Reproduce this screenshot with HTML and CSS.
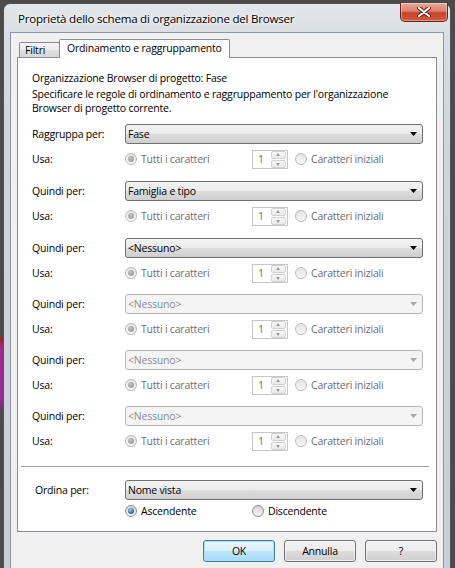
FILE: index.html
```html
<!DOCTYPE html>
<html lang="it">
<head>
<meta charset="utf-8">
<title>Proprietà dello schema di organizzazione del Browser</title>
<link rel="stylesheet" href="styles.css">
</head>
<body>
<div class="screen">
  <div class="window">
    <div class="titlebar">
      <span class="title">Proprietà dello schema di organizzazione del Browser</span>
      <div class="close">
        <svg width="14" height="10" viewBox="0 0 14 10"><path d="M2 1 L12 9 M12 1 L2 9" stroke="#5a1c12" stroke-width="4" stroke-linecap="round"/><path d="M2 1 L12 9 M12 1 L2 9" stroke="#fff" stroke-width="2.2" stroke-linecap="round"/></svg>
      </div>
    </div>
    <div class="client">
      <div class="tabs">
        <div class="tab">Filtri</div>
        <div class="tab active">Ordinamento e raggruppamento</div>
      </div>
      <div class="panel">
        <p class="info first">Organizzazione Browser di progetto: Fase</p>
        <p class="info">Specificare le regole di ordinamento e raggruppamento per l'organizzazione<br>Browser di progetto corrente.</p>

        <div class="groups">
          <div class="group">
            <div class="row"><span class="label">Raggruppa per:</span><div class="combo"><span>Fase</span><svg class="arrow" width="7" height="4" viewBox="0 0 7 4"><path d="M0 0H7L3.5 4Z"/></svg></div></div>
            <div class="row use"><span class="label">Usa:</span><div class="opts"><span class="radio dis"><span class="rc checked"></span>Tutti i caratteri</span><div class="spin"><span class="num">1</span><span class="btns"><span class="sb up"></span><span class="sb down"></span></span></div><span class="radio dis second"><span class="rc"></span>Caratteri iniziali</span></div></div>
          </div>
          <div class="group">
            <div class="row"><span class="label">Quindi per:</span><div class="combo"><span>Famiglia e tipo</span><svg class="arrow" width="7" height="4" viewBox="0 0 7 4"><path d="M0 0H7L3.5 4Z"/></svg></div></div>
            <div class="row use"><span class="label">Usa:</span><div class="opts"><span class="radio dis"><span class="rc checked"></span>Tutti i caratteri</span><div class="spin"><span class="num">1</span><span class="btns"><span class="sb up"></span><span class="sb down"></span></span></div><span class="radio dis second"><span class="rc"></span>Caratteri iniziali</span></div></div>
          </div>
          <div class="group">
            <div class="row"><span class="label">Quindi per:</span><div class="combo"><span>&lt;Nessuno&gt;</span><svg class="arrow" width="7" height="4" viewBox="0 0 7 4"><path d="M0 0H7L3.5 4Z"/></svg></div></div>
            <div class="row use"><span class="label">Usa:</span><div class="opts"><span class="radio dis"><span class="rc checked"></span>Tutti i caratteri</span><div class="spin"><span class="num">1</span><span class="btns"><span class="sb up"></span><span class="sb down"></span></span></div><span class="radio dis second"><span class="rc"></span>Caratteri iniziali</span></div></div>
          </div>
          <div class="group tight">
            <div class="row"><span class="label">Quindi per:</span><div class="combo disabled"><span>&lt;Nessuno&gt;</span><svg class="arrow" width="7" height="4" viewBox="0 0 7 4"><path d="M0 0H7L3.5 4Z"/></svg></div></div>
            <div class="row use"><span class="label">Usa:</span><div class="opts"><span class="radio dis"><span class="rc checked"></span>Tutti i caratteri</span><div class="spin"><span class="num">1</span><span class="btns"><span class="sb up"></span><span class="sb down"></span></span></div><span class="radio dis second"><span class="rc"></span>Caratteri iniziali</span></div></div>
          </div>
          <div class="group tight">
            <div class="row"><span class="label">Quindi per:</span><div class="combo disabled"><span>&lt;Nessuno&gt;</span><svg class="arrow" width="7" height="4" viewBox="0 0 7 4"><path d="M0 0H7L3.5 4Z"/></svg></div></div>
            <div class="row use"><span class="label">Usa:</span><div class="opts"><span class="radio dis"><span class="rc checked"></span>Tutti i caratteri</span><div class="spin"><span class="num">1</span><span class="btns"><span class="sb up"></span><span class="sb down"></span></span></div><span class="radio dis second"><span class="rc"></span>Caratteri iniziali</span></div></div>
          </div>
          <div class="group tight">
            <div class="row"><span class="label">Quindi per:</span><div class="combo disabled"><span>&lt;Nessuno&gt;</span><svg class="arrow" width="7" height="4" viewBox="0 0 7 4"><path d="M0 0H7L3.5 4Z"/></svg></div></div>
            <div class="row use"><span class="label">Usa:</span><div class="opts"><span class="radio dis"><span class="rc checked"></span>Tutti i caratteri</span><div class="spin"><span class="num">1</span><span class="btns"><span class="sb up"></span><span class="sb down"></span></span></div><span class="radio dis second"><span class="rc"></span>Caratteri iniziali</span></div></div>
          </div>
        </div>

        <hr class="sep">

        <div class="row order"><span class="label">Ordina per:</span><div class="combo"><span>Nome vista</span><svg class="arrow" width="7" height="4" viewBox="0 0 7 4"><path d="M0 0H7L3.5 4Z"/></svg></div></div>
        <div class="dirs">
          <span class="radio"><span class="rc on"></span>Ascendente</span>
          <span class="radio"><span class="rc off"></span>Discendente</span>
        </div>
      </div>
      <div class="buttons">
        <button class="btn default">OK</button>
        <button class="btn">Annulla</button>
        <button class="btn">?</button>
      </div>
    </div>
  </div>
</div>
</body>
</html>
```
FILE: styles.css
```css
* { box-sizing: border-box; }
html, body { margin: 0; padding: 0; }
body {
  width: 455px;
  height: 568px;
  overflow: hidden;
  background: #4b4b4b;
  font-family: "Open Sans", "Noto Sans", sans-serif;
  font-size: 10.5px;
  letter-spacing: -0.2px;
  color: #000;
}
.screen {
  height: 568px;
  padding: 3px 4px 0 3px;
  background-color: #4b4b4b;
  background-image: linear-gradient(to bottom, #4b4b4b 0, #4b4b4b 336px, #a3202a 339px, #a12a8e 350px, #9c2696 398px, #5e3e5e 410px, #4b4b4b 414px);
  background-size: 3px 100%;
  background-repeat: no-repeat;
}
.window {
  position: relative;
  height: 565px;
  border: 1px solid #4e545b;
  border-bottom: none;
  border-radius: 7px 7px 0 0;
  background: linear-gradient(to bottom, #e3e7eb 0, #d9dee4 28px, #cfd5dc 120px, #c8cfd7 100%);
  padding: 0 6px;
  display: flex;
  flex-direction: column;
}
.titlebar {
  height: 28px;
  flex: none;
  display: flex;
  align-items: center;
  padding-left: 8px;
  padding-top: 1px;
}
.title {
  font-size: 11.6px;
  letter-spacing: -0.25px;
  color: #000;
  text-shadow: 0 0 6px #fff, 0 0 3px #fff;
}
.close {
  position: absolute;
  top: -1px;
  right: 2px;
  width: 48px;
  height: 19px;
  border: 1px solid #6b2419;
  border-top: none;
  border-radius: 0 0 5px 5px;
  background: linear-gradient(to bottom, #e9a99b 0, #dd7f6b 45%, #c7432b 55%, #d35a3a 100%);
  box-shadow: inset 0 0 0 1px rgba(255,255,255,0.35);
  display: flex;
  align-items: center;
  justify-content: center;
}
.client {
  flex: 1;
  background: #f0f0f0;
  border: 1px solid #8d96a1;
  border-bottom: none;
  padding: 6px 6px 0 6px;
}
.tabs {
  display: flex;
  align-items: flex-end;
  height: 18px;
  padding-left: 2px;
  position: relative;
  z-index: 1;
}
.tab {
  width: 41px;
  height: 15px;
  padding: 0 0 0 5px;
  border: 1px solid #898c95;
  border-bottom: none;
  border-radius: 2px 2px 0 0;
  background: linear-gradient(to bottom, #f4f4f4 0, #ececec 50%, #e0e0e0 51%, #d6d6d6 100%);
  line-height: 15px;
  white-space: nowrap;
}
.tab.active {
  width: 171px;
  height: 19px;
  margin-left: -1px;
  margin-bottom: -1px;
  padding-left: 7px;
  background: #fff;
  line-height: 17px;
}
.panel {
  height: 475px;
  border: 1px solid #898c95;
  background: #fff;
}
.info {
  margin: 2px 0 0 0;
  padding-left: 14px;
  line-height: 14px;
}
.info.first { margin-top: 13px; }
.groups { margin-top: 9px; }
.group { padding-left: 14px; }
.group + .group { margin-top: 12px; }
.group.tight { margin-top: 11px; }
.row {
  display: flex;
  align-items: center;
  height: 20px;
}
.row.use { margin-top: 5px; }
.label {
  width: 93px;
  flex: none;
}
.combo {
  position: relative;
  width: 298px;
  height: 20px;
  border: 1px solid #707070;
  border-radius: 3px;
  background: linear-gradient(to bottom, #f3f3f3 0, #ebebeb 50%, #dddddd 51%, #cfcfcf 100%);
  display: flex;
  align-items: center;
  padding-left: 2px;
}
.combo .arrow {
  position: absolute;
  right: 5px;
  top: 7px;
  fill: #000;
}
.combo.disabled {
  border-color: #b3b6b9;
  background: #f4f4f4;
  color: #8b8b8b;
}
.combo.disabled .arrow { fill: #a6a6a6; }
.opts {
  display: flex;
  align-items: center;
  height: 20px;
}
.radio {
  display: flex;
  align-items: center;
  gap: 4px;
  width: 127px;
  flex: none;
  white-space: nowrap;
}
.radio.dis { color: #6d6d6d; }
.radio.second { width: auto; margin-left: 7px; }
.rc {
  position: relative;
  width: 12px;
  height: 12px;
  flex: none;
  border-radius: 50%;
  border: 1px solid #b9b9b9;
  background: linear-gradient(to bottom, #e4e4e4, #f8f8f8);
}
.rc.checked::after {
  content: "";
  position: absolute;
  left: 2px; top: 2px;
  width: 6px; height: 6px;
  border-radius: 50%;
  background: radial-gradient(circle at 40% 35%, #c4c4c4, #8f8f8f);
}
.rc.on, .rc.off {
  border-color: #8e8f8f;
  background: linear-gradient(to bottom, #d2d2d2, #f7f7f7);
}
.rc.on::after {
  content: "";
  position: absolute;
  left: 2px; top: 2px;
  width: 6px; height: 6px;
  border-radius: 50%;
  background: radial-gradient(circle at 40% 35%, #9fd2f4, #2b6ea3 60%, #1a4a7a);
}
.spin {
  width: 36px;
  height: 19px;
  flex: none;
  border: 1px solid #c6c6c6;
  background: #fff;
  display: flex;
  align-items: center;
  justify-content: space-between;
  padding: 0 1px 0 5px;
  color: #6d6d6d;
}
.btns {
  display: flex;
  flex-direction: column;
  gap: 1px;
  width: 15px;
}
.sb {
  position: relative;
  height: 8px;
  border: 1px solid #d2d2d2;
  border-radius: 2px;
  background: linear-gradient(to bottom, #f8f8f8, #e8e8e8);
}
.sb::after {
  content: "";
  position: absolute;
  left: 4px;
  width: 0; height: 0;
  border-left: 2.5px solid transparent;
  border-right: 2.5px solid transparent;
}
.sb.up::after { top: 1px; border-bottom: 3px solid #9a9a9a; }
.sb.down::after { top: 2px; border-top: 3px solid #9a9a9a; }
.sep {
  height: 0;
  border: 0;
  border-top: 1px solid #a0a0a0;
  margin: 15px 7px 0 3px;
}
.row.order {
  margin-top: 13px;
  padding-left: 17px;
}
.row.order .label { width: 90px; }
.dirs {
  display: flex;
  align-items: center;
  height: 18px;
  margin-top: 2px;
  padding-left: 107px;
}
.buttons {
  display: flex;
  justify-content: flex-end;
  gap: 9px;
  margin-top: 8px;
}
.btn {
  width: 72px;
  height: 22px;
  border: 1px solid #707070;
  border-radius: 3px;
  background: linear-gradient(to bottom, #f3f3f3 0, #ebebeb 50%, #dddddd 51%, #cfcfcf 100%);
  box-shadow: inset 0 0 0 1px rgba(255,255,255,0.6);
  font-family: inherit;
  font-size: 10.5px;
  letter-spacing: -0.2px;
  color: #000;
  padding: 0;
}
.btn.default {
  border-color: #3c7fb1;
  background: linear-gradient(to bottom, #eaf6fd 0, #d9f0fc 50%, #bee6fd 51%, #a7d9f5 100%);
  box-shadow: inset 0 0 0 1px #a8dcf7;
}
```
